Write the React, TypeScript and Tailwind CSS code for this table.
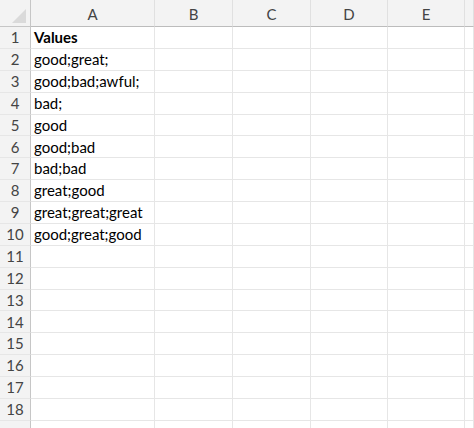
import React from 'react';

const columns = ['A', 'B', 'C', 'D', 'E', ''];

const values: Record<number, string> = {
  1: 'Values',
  2: 'good;great;',
  3: 'good;bad;awful;',
  4: 'bad;',
  5: 'good',
  6: 'good;bad',
  7: 'bad;bad',
  8: 'great;good',
  9: 'great;great;great',
  10: 'good;great;good',
};

const rows = Array.from({ length: 19 }, (_, i) => i + 1);

export default function App() {
  return (
    <div className="w-[474px] h-[428px] overflow-hidden bg-white font-['Lato','Liberation_Sans',sans-serif] text-[15px]">
      <div className="grid grid-cols-[31px_124px_78px_78px_77px_77px_1fr]">
        {/* Corner */}
        <div className="h-[27px] bg-[#f3f3f3] border-r border-b border-[#c6c6c6] flex items-end justify-end pr-[4px] pb-[3px]">
          <svg width="14" height="14" viewBox="0 0 14 14">
            <polygon points="14,0 14,14 0,14" fill="#dadada" />
          </svg>
        </div>

        {/* Column headers */}
        {columns.map((c, i) => (
          <div
            key={'h' + i}
            className="h-[27px] bg-[#f3f3f3] border-b border-r border-b-[#bcbcbc] border-r-[#e0e0e0] flex items-center justify-center text-[#444] pt-[2px]"
          >
            {c}
          </div>
        ))}

        {rows.map((r) => (
          <React.Fragment key={r}>
            <div className="h-[21.88px] bg-[#f3f3f3] border-r border-b border-r-[#c6c6c6] border-b-[#e6e6e6] flex items-center justify-center text-[#444]">
              {r < 19 ? r : ''}
            </div>
            {columns.map((_, i) => (
              <div
                key={i}
                className={
                  'h-[21.88px] border-r border-b border-[#e6e6e6] flex items-center pl-[3px] text-black whitespace-nowrap ' +
                  (r === 1 && i === 0 ? 'font-bold' : '')
                }
              >
                {i === 0 ? values[r] ?? '' : ''}
              </div>
            ))}
          </React.Fragment>
        ))}
      </div>
    </div>
  );
}
